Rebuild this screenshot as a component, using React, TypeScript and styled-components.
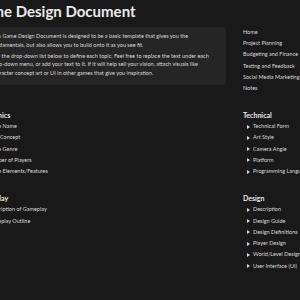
import React from "react";
import styled, { createGlobalStyle } from "styled-components";

const Global = createGlobalStyle`
  html, body { margin: 0; padding: 0; background: #191919; overflow: hidden; }
  body { font-family: Lato, "Noto Sans", sans-serif; color: #d4d4d4; }
  #root { width: 300px; height: 300px; overflow: hidden; }
`;

const Page = styled.div`
  margin-left: -27px;
  padding-top: 2px;
  width: 380px;
`;

const Title = styled.h1`
  margin: 0 0 6.5px;
  font-size: 15px;
  line-height: 18.5px;
  font-weight: 700;
  color: #ebebeb;
  white-space: nowrap;
`;

const Grid = styled.div`
  display: grid;
  grid-template-columns: 253px 110px;
  column-gap: 17px;
  row-gap: 15.4px;
  align-items: start;
`;

const Callout = styled.div`
  background: #252525;
  padding: 5px 8px 8px 18px;
  font-size: 5.5px;
  line-height: 8.5px;
  border-radius: 2px;
  color: #d9d9d9;
`;

const Para = styled.p`
  margin: 0;
  & + & { margin-top: 2.5px; }
`;

const Nav = styled.nav`
  display: flex;
  flex-direction: column;
`;

const NavLink = styled.a`
  font-size: 5.5px;
  line-height: 11.2px;
  color: #d9d9d9;
  text-decoration: none;
  white-space: nowrap;
`;

const Section = styled.section<{ $indent: number }>`
  padding-left: ${(p) => p.$indent}px;
  white-space: nowrap;
`;

const Heading = styled.h3`
  margin: 0 0 1.5px;
  font-size: 7px;
  line-height: 10px;
  font-weight: 700;
  color: #e8e8e8;
`;

const Item = styled.div`
  display: flex;
  align-items: center;
  padding-left: 4px;
  font-size: 5.5px;
  line-height: 11.25px;
  color: #d9d9d9;
`;

const Arrow = styled.span`
  width: 0;
  height: 0;
  border-left: 3px solid #d9d9d9;
  border-top: 2px solid transparent;
  border-bottom: 2px solid transparent;
  margin-right: 3px;
  flex: none;
`;

const Toggle = ({ children }: { children: React.ReactNode }) => (
  <Item>
    <Arrow />
    <span>{children}</span>
  </Item>
);

const Block = ({ title, items, indent }: { title: string; items: string[]; indent: number }) => (
  <Section $indent={indent}>
    <Heading>{title}</Heading>
    {items.map((t) => (
      <Toggle key={t}>{t}</Toggle>
    ))}
  </Section>
);

export default function App() {
  return (
    <>
      <Global />
      <Page>
        <Title>Game Design Document</Title>
        <Grid>
          <Callout>
            <Para>
              This Game Design Document is designed to be a basic template that gives you the
              fundamentals, but also allows you to build onto it as you see fit.
            </Para>
            <Para>
              Use the drop-down list below to define each topic. Feel free to replace the text under each
              drop-down menu, or add your text to it. If it will help sell your vision, attach visuals like
              character concept art or UI in other games that give you inspiration.
            </Para>
          </Callout>
          <Nav>
            <NavLink href="#">Home</NavLink>
            <NavLink href="#">Project Planning</NavLink>
            <NavLink href="#">Budgeting and Finance</NavLink>
            <NavLink href="#">Testing and Feedback</NavLink>
            <NavLink href="#">Social Media Marketing</NavLink>
            <NavLink href="#">Notes</NavLink>
          </Nav>
          <Block
            indent={4}
            title="Mechanics"
            items={["Game Name", "Core Concept", "Game Genre", "Number of Players", "Game Elements/Features"]}
          />
          <Block
            indent={0}
            title="Technical"
            items={["Technical Form", "Art Style", "Camera Angle", "Platform", "Programming Language"]}
          />
          <Block indent={4} title="Gameplay" items={["Description of Gameplay", "Gameplay Outline"]} />
          <Block
            indent={0}
            title="Design"
            items={[
              "Description",
              "Design Guide",
              "Design Definitions",
              "Player Design",
              "World/Level Design",
              "User Interface (UI)",
            ]}
          />
        </Grid>
      </Page>
    </>
  );
}
